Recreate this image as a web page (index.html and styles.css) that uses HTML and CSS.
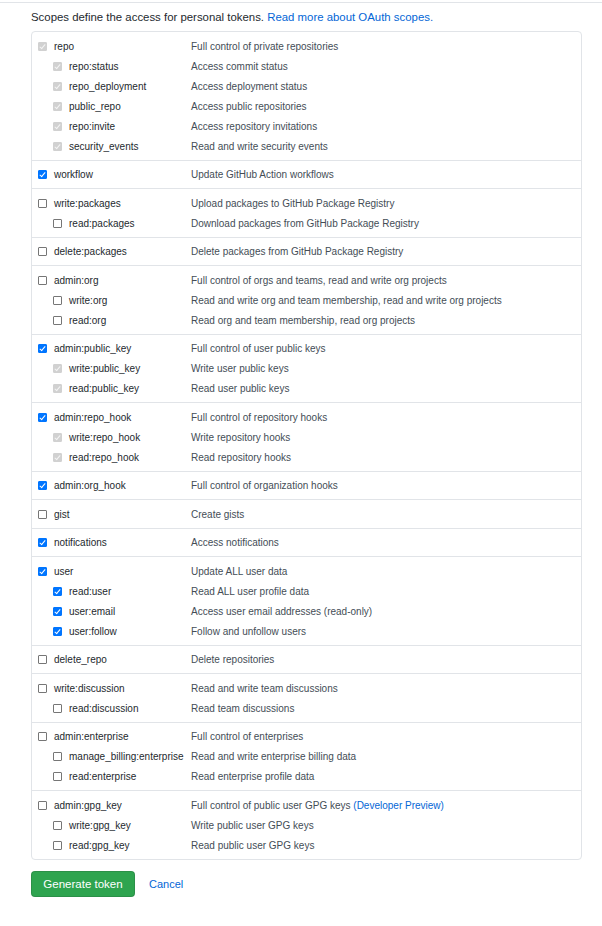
FILE: index.html
```html
<!DOCTYPE html>
<html>
<head>
<meta charset="utf-8">
<link rel="stylesheet" href="styles.css">
</head>
<body>
<div class="topline"></div>
<div class="page">
  <p class="intro">Scopes define the access for personal tokens. <a href="#">Read more about OAuth scopes.</a></p>
  <div class="scopes">
    <div class="group">
      <div class="row"><div class="nm"><span class="cb on dis"></span><span>repo</span></div><div class="desc">Full control of private repositories</div></div>
      <div class="row sub"><div class="nm"><span class="cb on dis"></span><span>repo:status</span></div><div class="desc">Access commit status</div></div>
      <div class="row sub"><div class="nm"><span class="cb on dis"></span><span>repo_deployment</span></div><div class="desc">Access deployment status</div></div>
      <div class="row sub"><div class="nm"><span class="cb on dis"></span><span>public_repo</span></div><div class="desc">Access public repositories</div></div>
      <div class="row sub"><div class="nm"><span class="cb on dis"></span><span>repo:invite</span></div><div class="desc">Access repository invitations</div></div>
      <div class="row sub"><div class="nm"><span class="cb on dis"></span><span>security_events</span></div><div class="desc">Read and write security events</div></div>
    </div>
    <div class="group">
      <div class="row"><div class="nm"><span class="cb on"></span><span>workflow</span></div><div class="desc">Update GitHub Action workflows</div></div>
    </div>
    <div class="group">
      <div class="row"><div class="nm"><span class="cb"></span><span>write:packages</span></div><div class="desc">Upload packages to GitHub Package Registry</div></div>
      <div class="row sub"><div class="nm"><span class="cb"></span><span>read:packages</span></div><div class="desc">Download packages from GitHub Package Registry</div></div>
    </div>
    <div class="group">
      <div class="row"><div class="nm"><span class="cb"></span><span>delete:packages</span></div><div class="desc">Delete packages from GitHub Package Registry</div></div>
    </div>
    <div class="group">
      <div class="row"><div class="nm"><span class="cb"></span><span>admin:org</span></div><div class="desc">Full control of orgs and teams, read and write org projects</div></div>
      <div class="row sub"><div class="nm"><span class="cb"></span><span>write:org</span></div><div class="desc">Read and write org and team membership, read and write org projects</div></div>
      <div class="row sub"><div class="nm"><span class="cb"></span><span>read:org</span></div><div class="desc">Read org and team membership, read org projects</div></div>
    </div>
    <div class="group">
      <div class="row"><div class="nm"><span class="cb on"></span><span>admin:public_key</span></div><div class="desc">Full control of user public keys</div></div>
      <div class="row sub"><div class="nm"><span class="cb on dis"></span><span>write:public_key</span></div><div class="desc">Write user public keys</div></div>
      <div class="row sub"><div class="nm"><span class="cb on dis"></span><span>read:public_key</span></div><div class="desc">Read user public keys</div></div>
    </div>
    <div class="group">
      <div class="row"><div class="nm"><span class="cb on"></span><span>admin:repo_hook</span></div><div class="desc">Full control of repository hooks</div></div>
      <div class="row sub"><div class="nm"><span class="cb on dis"></span><span>write:repo_hook</span></div><div class="desc">Write repository hooks</div></div>
      <div class="row sub"><div class="nm"><span class="cb on dis"></span><span>read:repo_hook</span></div><div class="desc">Read repository hooks</div></div>
    </div>
    <div class="group">
      <div class="row"><div class="nm"><span class="cb on"></span><span>admin:org_hook</span></div><div class="desc">Full control of organization hooks</div></div>
    </div>
    <div class="group">
      <div class="row"><div class="nm"><span class="cb"></span><span>gist</span></div><div class="desc">Create gists</div></div>
    </div>
    <div class="group">
      <div class="row"><div class="nm"><span class="cb on"></span><span>notifications</span></div><div class="desc">Access notifications</div></div>
    </div>
    <div class="group">
      <div class="row"><div class="nm"><span class="cb on"></span><span>user</span></div><div class="desc">Update ALL user data</div></div>
      <div class="row sub"><div class="nm"><span class="cb on"></span><span>read:user</span></div><div class="desc">Read ALL user profile data</div></div>
      <div class="row sub"><div class="nm"><span class="cb on"></span><span>user:email</span></div><div class="desc">Access user email addresses (read-only)</div></div>
      <div class="row sub"><div class="nm"><span class="cb on"></span><span>user:follow</span></div><div class="desc">Follow and unfollow users</div></div>
    </div>
    <div class="group">
      <div class="row"><div class="nm"><span class="cb"></span><span>delete_repo</span></div><div class="desc">Delete repositories</div></div>
    </div>
    <div class="group">
      <div class="row"><div class="nm"><span class="cb"></span><span>write:discussion</span></div><div class="desc">Read and write team discussions</div></div>
      <div class="row sub"><div class="nm"><span class="cb"></span><span>read:discussion</span></div><div class="desc">Read team discussions</div></div>
    </div>
    <div class="group">
      <div class="row"><div class="nm"><span class="cb"></span><span>admin:enterprise</span></div><div class="desc">Full control of enterprises</div></div>
      <div class="row sub"><div class="nm"><span class="cb"></span><span>manage_billing:enterprise</span></div><div class="desc">Read and write enterprise billing data</div></div>
      <div class="row sub"><div class="nm"><span class="cb"></span><span>read:enterprise</span></div><div class="desc">Read enterprise profile data</div></div>
    </div>
    <div class="group">
      <div class="row"><div class="nm"><span class="cb"></span><span>admin:gpg_key</span></div><div class="desc">Full control of public user GPG keys <a href="#">(Developer Preview)</a></div></div>
      <div class="row sub"><div class="nm"><span class="cb"></span><span>write:gpg_key</span></div><div class="desc">Write public user GPG keys</div></div>
      <div class="row sub"><div class="nm"><span class="cb"></span><span>read:gpg_key</span></div><div class="desc">Read public user GPG keys</div></div>
    </div>
  </div>
  <div class="actions">
    <button class="btn" type="button">Generate token</button>
    <a href="#" class="cancel">Cancel</a>
  </div>
</div>
</body>
</html>
```

FILE: styles.css
```css
html, body {
  margin: 0;
  padding: 0;
  background: #fff;
}
body {
  font-family: "Liberation Sans", Arial, sans-serif;
  color: #24292e;
  font-size: 10px;
}
a {
  color: #0366d6;
  text-decoration: none;
}
.topline {
  height: 1px;
  margin-top: 2px;
  background: #e1e4e8;
}
.page {
  margin-left: 31px;
  width: 551px;
}
.intro {
  margin: 0;
  padding-top: 4px;
  height: 24px;
  line-height: 20px;
  font-size: 11.4px;
  color: #24292e;
}
.scopes {
  border: 1px solid #e1e4e8;
  border-radius: 4px;
}
.group {
  padding: 4px 0 3.5px;
  border-top: 1px solid #e1e4e8;
}
.group:first-child {
  border-top: 0;
}
.row {
  display: grid;
  grid-template-columns: 153px 1fr;
  height: 20px;
  align-items: center;
  padding-left: 6px;
}
.nm {
  display: flex;
  align-items: center;
  color: #24292e;
  white-space: nowrap;
}
.sub .nm {
  padding-left: 15px;
}
.desc {
  color: #444d56;
  white-space: nowrap;
}
.cb {
  box-sizing: border-box;
  width: 9px;
  height: 9px;
  margin-right: 7px;
  border: 1px solid #767676;
  border-radius: 1px;
  background: #fff;
  flex: none;
  position: relative;
}
.cb.on {
  border-color: #0075ff;
  background: #0075ff;
}
.cb.on::after {
  content: "";
  position: absolute;
  left: 2px;
  top: 0px;
  width: 2px;
  height: 5px;
  border: solid #fff;
  border-width: 0 1.5px 1.5px 0;
  transform: rotate(40deg);
}
.cb.on.dis {
  border-color: #d1d1d1;
  background: #d1d1d1;
}
.cb.on.dis::after {
  border-color: #f4f4f4;
}
.actions {
  display: flex;
  align-items: center;
  gap: 14px;
  margin-top: 11px;
}
.btn {
  height: 26px;
  width: 104px;
  padding: 0;
  border: 1px solid rgba(27, 31, 35, 0.15);
  border-radius: 4px;
  background: #2ea44f;
  color: #fff;
  font-family: "Liberation Sans", Arial, sans-serif;
  font-size: 11.5px;
}
.cancel {
  font-size: 11px;
}
```
